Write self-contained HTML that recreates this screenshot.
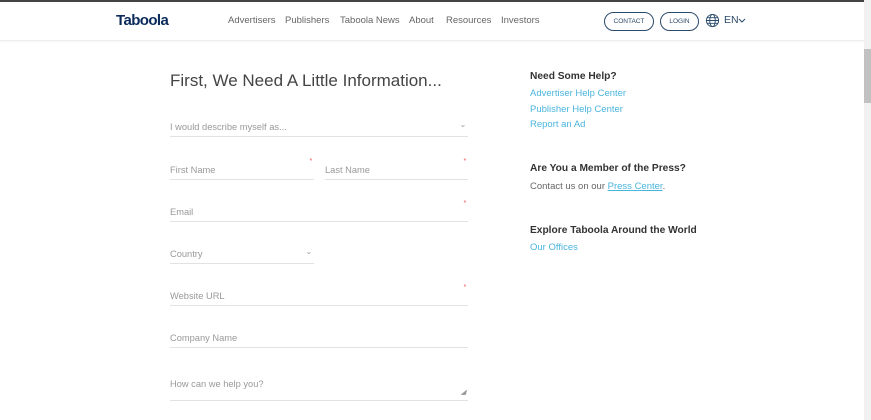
<!DOCTYPE html>
<html><head><style>
*{margin:0;padding:0;box-sizing:border-box}
body{width:871px;height:420px;overflow:hidden;background:#fff;font-family:"Liberation Sans",sans-serif;position:relative}
.top{position:absolute;left:0;top:0;width:871px;height:2px;background:#444}
.hdr{position:absolute;left:0;top:2px;width:864px;height:39px;border-bottom:1px solid #eee;box-shadow:0 1px 2px rgba(0,0,0,.04)}
.logo{position:absolute;left:116px;top:10px;font-size:15px;font-weight:bold;color:#0b2a5b;letter-spacing:-.6px}
.nav{position:absolute;top:13px;font-size:9.5px;color:#666}
.btn{position:absolute;top:10px;height:19px;border:1px solid #2a4a6a;border-radius:10px;font-size:6.5px;color:#2a4a6a;text-align:center;line-height:17px}
.sb{position:absolute;left:864px;top:0;width:7px;height:420px;background:#f1f1f1}
.th{position:absolute;left:864px;top:49px;width:7px;height:54px;background:#c1c1c1}
h1{position:absolute;left:170px;top:71px;font-size:17px;font-weight:normal;color:#444}
.f{position:absolute;border-bottom:1px solid #e2e2e2;height:20px;font-size:9.3px;color:#999}
.f span{position:absolute;left:0;top:5px}
.req{position:absolute;right:2px;top:-2px;color:#e55;font-size:7px}
.car{position:absolute;right:2px;top:3px;color:#999;font-size:8px}
.r{position:absolute;left:530px;font-size:9.5px}
.h{color:#333;font-weight:bold;font-size:10.2px}
.l{color:#4ab5dd}
.t{color:#666}
</style></head><body>
<div class="top"></div>
<div class="hdr">
<div class="logo">Taboola</div>
<div class="nav" style="left:228px">Advertisers</div>
<div class="nav" style="left:285px">Publishers</div>
<div class="nav" style="left:340px">Taboola News</div>
<div class="nav" style="left:409px">About</div>
<div class="nav" style="left:446px">Resources</div>
<div class="nav" style="left:501px">Investors</div>
<div class="btn" style="left:604px;width:50px">CONTACT</div>
<div class="btn" style="left:660px;width:39px">LOGIN</div>
<svg style="position:absolute;left:705px;top:11px" width="15" height="15" viewBox="0 0 16 16" fill="none" stroke="#2a4a6a" stroke-width="1"><circle cx="8" cy="8" r="6.5"/><ellipse cx="8" cy="8" rx="3" ry="6.5"/><path d="M1.5 8h13M2.5 5h11M2.5 11h11"/></svg>
<div class="nav" style="left:724px;top:12px;color:#2a4a6a;font-size:10.5px">EN</div>
<svg style="position:absolute;left:738px;top:16px" width="8" height="5" viewBox="0 0 8 5" fill="none" stroke="#2a4a6a"><path d="M1 1l3 3 3-3"/></svg>
</div>
<div class="sb"></div><div class="th"></div>
<h1>First, We Need A Little Information...</h1>
<div class="f" style="left:170px;top:117px;width:298px"><span>I would describe myself as...</span><i class="car">⌄</i></div>
<div class="f" style="left:170px;top:160px;width:144px"><span>First Name</span><i class="req">*</i></div>
<div class="f" style="left:325px;top:160px;width:143px"><span>Last Name</span><i class="req">*</i></div>
<div class="f" style="left:170px;top:202px;width:298px"><span>Email</span><i class="req">*</i></div>
<div class="f" style="left:170px;top:244px;width:144px"><span>Country</span><i class="car">⌄</i></div>
<div class="f" style="left:170px;top:286px;width:298px"><span>Website URL</span><i class="req">*</i></div>
<div class="f" style="left:170px;top:328px;width:298px"><span>Company Name</span></div>
<div class="f" style="left:170px;top:374px;width:298px;height:27px"><span>How can we help you?</span><i class="car" style="top:14px;font-size:7px">◢</i></div>
<div class="r h" style="top:71px">Need Some Help?</div>
<div class="r l" style="top:88px">Advertiser Help Center</div>
<div class="r l" style="top:104px">Publisher Help Center</div>
<div class="r l" style="top:119px">Report an Ad</div>
<div class="r h" style="top:163px">Are You a Member of the Press?</div>
<div class="r t" style="top:181px">Contact us on our <u class="l">Press Center</u>.</div>
<div class="r h" style="top:225px">Explore Taboola Around the World</div>
<div class="r l" style="top:242px">Our Offices</div>
</body></html>
